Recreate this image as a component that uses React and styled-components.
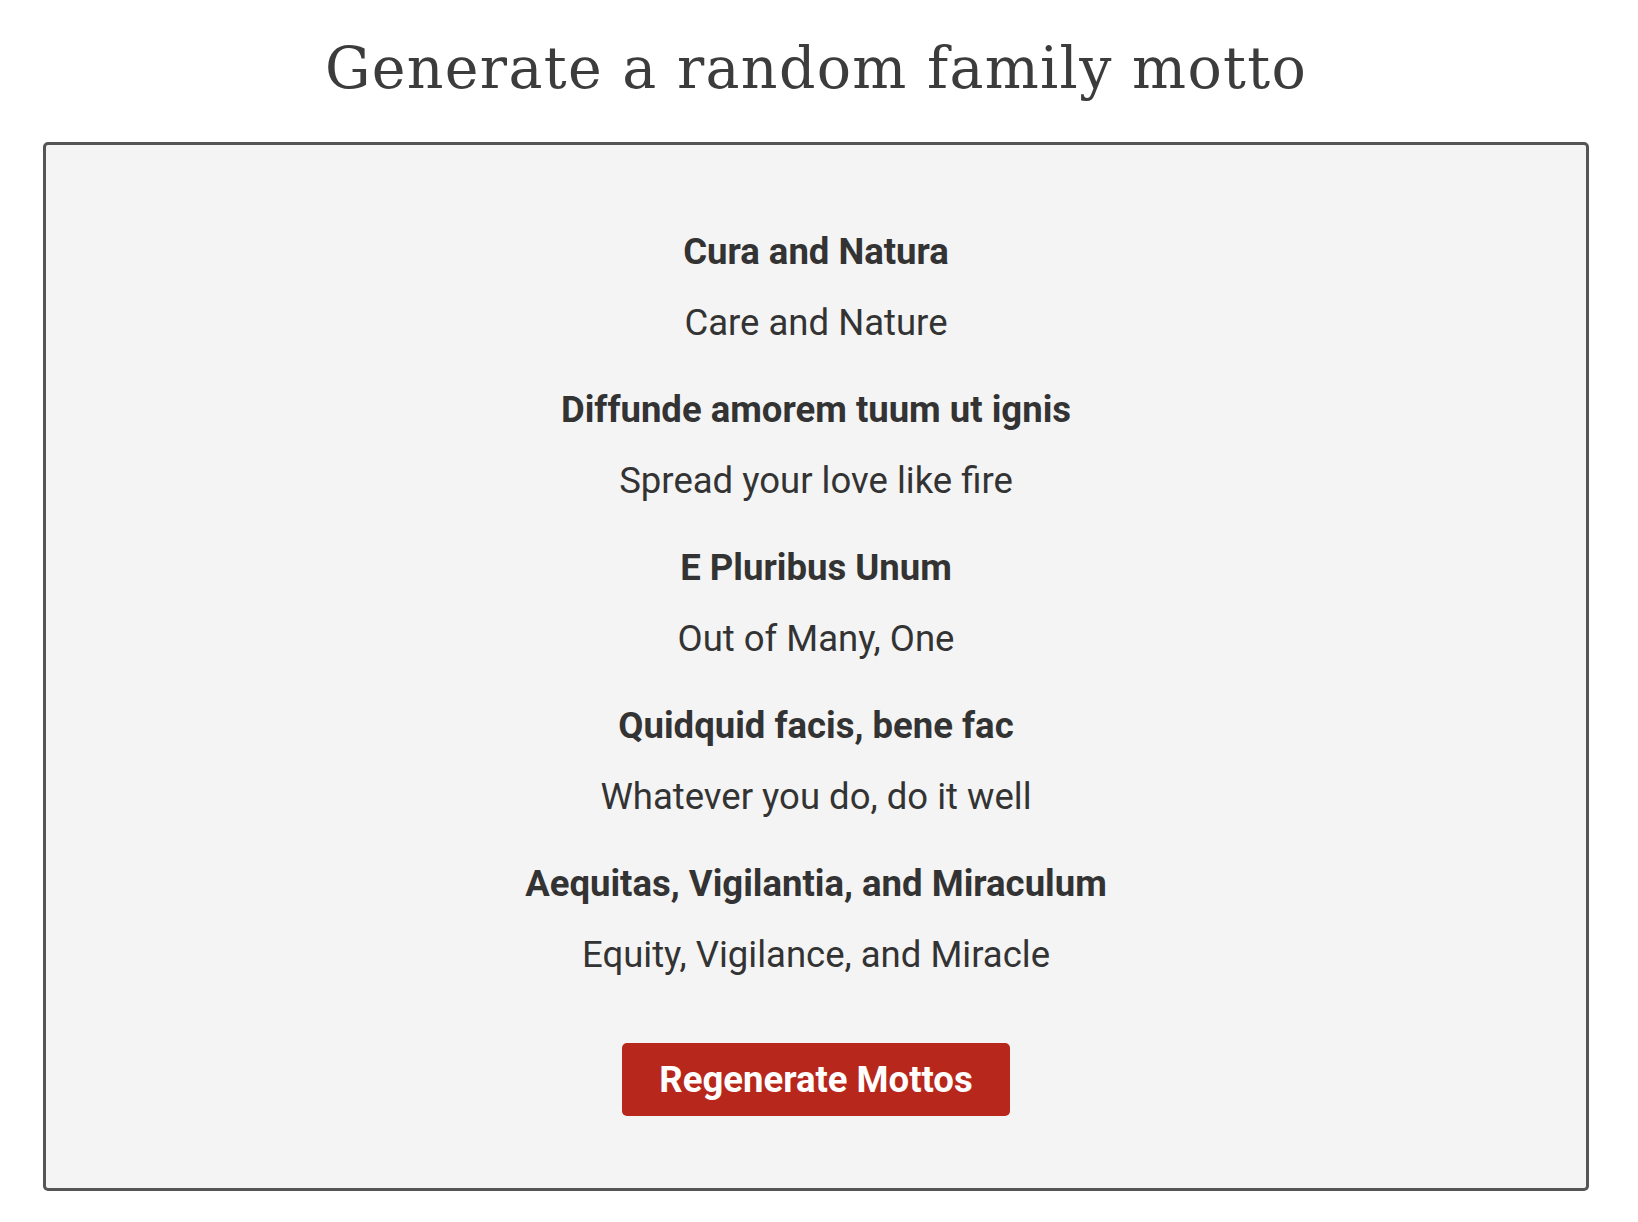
import React, { useState } from "react";
import styled, { createGlobalStyle } from "styled-components";

const GlobalStyle = createGlobalStyle`
  html, body {
    margin: 0;
    padding: 0;
    background: #ffffff;
  }
  body {
    font-family: Roboto, "Liberation Sans", Arial, sans-serif;
    color: #333333;
  }
`;

const Page = styled.main`
  display: flex;
  flex-direction: column;
  padding: 0 49px 0 43px;
`;

const Title = styled.h1`
  margin: 0;
  height: 142px;
  display: flex;
  align-items: center;
  justify-content: center;
  padding-bottom: 6px;
  box-sizing: border-box;
  font-family: "DejaVu Serif", "Liberation Serif", serif;
  font-weight: 400;
  font-size: 57px;
  letter-spacing: 1.3px;
  color: #3c3c3c;
`;

const Panel = styled.section`
  display: flex;
  flex-direction: column;
  align-items: center;
  background: #f4f4f4;
  border: 3px solid #555555;
  border-radius: 5px;
  padding: 87px 20px 72px;
`;

const MottoList = styled.ul`
  list-style: none;
  margin: 0;
  padding: 0;
  display: flex;
  flex-direction: column;
  align-items: center;
  gap: 47px;
`;

const Motto = styled.li`
  display: flex;
  flex-direction: column;
  align-items: center;
  gap: 31px;
`;

const Latin = styled.h3`
  margin: 0;
  font-size: 36.5px;
  line-height: 40px;
  font-weight: 700;
  color: #333333;
`;

const English = styled.p`
  margin: 0;
  font-size: 36.5px;
  line-height: 40px;
  font-weight: 400;
  color: #333333;
`;

const RegenerateButton = styled.button`
  margin-top: 68px;
  height: 73px;
  padding: 0 37px;
  border: none;
  border-radius: 5px;
  background: #b8271c;
  color: #ffffff;
  font-family: Roboto, "Liberation Sans", Arial, sans-serif;
  font-size: 36.5px;
  font-weight: 700;
  cursor: pointer;
`;

const mottos = [
  { latin: "Cura and Natura", english: "Care and Nature" },
  { latin: "Diffunde amorem tuum ut ignis", english: "Spread your love like fire" },
  { latin: "E Pluribus Unum", english: "Out of Many, One" },
  { latin: "Quidquid facis, bene fac", english: "Whatever you do, do it well" },
  { latin: "Aequitas, Vigilantia, and Miraculum", english: "Equity, Vigilance, and Miracle" },
];

const App = () => {
  const [list, setList] = useState(mottos);

  const regenerate = () => {
    setList([...list].sort(() => Math.random() - 0.5));
  };

  return (
    <>
      <GlobalStyle />
      <Page>
        <Title>Generate a random family motto</Title>
        <Panel>
          <MottoList>
            {list.map((m, i) => (
              <Motto key={i}>
                <Latin>{m.latin}</Latin>
                <English>{m.english}</English>
              </Motto>
            ))}
          </MottoList>
          <RegenerateButton onClick={regenerate}>Regenerate Mottos</RegenerateButton>
        </Panel>
      </Page>
    </>
  );
};

export default App;
